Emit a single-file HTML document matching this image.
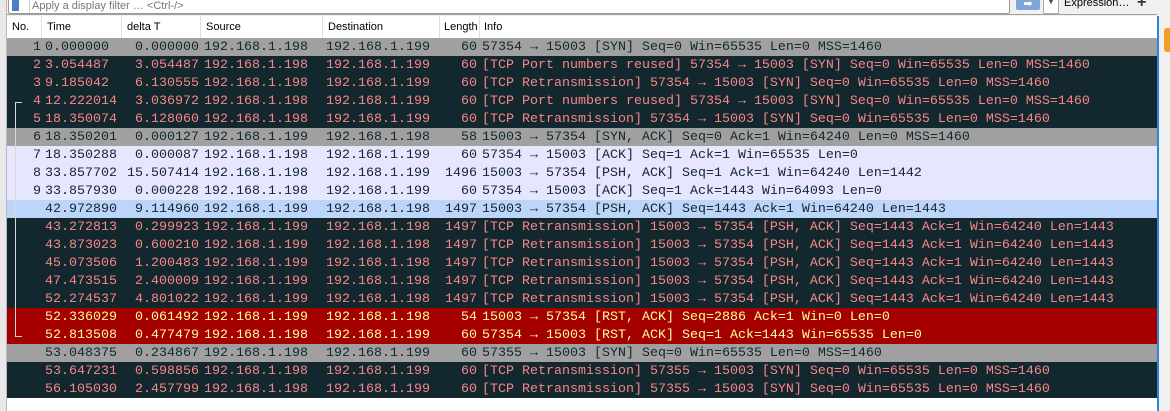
<!DOCTYPE html>
<html><head><meta charset="utf-8"><style>
body{margin:0;width:1170px;height:411px;background:#f0f0f0;position:relative;overflow:hidden;font-family:"Liberation Sans",sans-serif}
.left{position:absolute;left:0;top:0;width:6px;height:411px;background:#e8e8e8;border-right:1px solid #b8b8b8}
.filter{position:absolute;left:8px;top:-2px;width:1000px;height:14px;background:#fff;border:1px solid #9a9a9a;border-radius:2px;font-size:11px;color:#777;line-height:14px}
.filter .bm{position:absolute;left:3px;top:1px;width:7px;height:11px;background:#4a7fc0}
.filter .sep{position:absolute;left:20px;top:0;width:1px;height:14px;background:#ccc}
.filter span{position:absolute;left:23px;top:0}
.arrow{position:absolute;left:1016px;top:-2px;width:24px;height:12px;background:#7fa6d8;border-radius:2px;color:#fff;font-size:11px;text-align:center;line-height:12px}
.dd{position:absolute;left:1043px;top:-2px;width:14px;height:14px;background:#fff;border:1px solid #aaa;font-size:7px;text-align:center;color:#444}
.expr{position:absolute;left:1064px;top:-3px;font-size:11px;color:#000}
.plus{position:absolute;left:1137px;top:-6px;font-size:16px;font-weight:bold;color:#333}
.hline{position:absolute;left:7px;top:14px;width:1150px;height:1px;background:#a0a0a0}
.table{position:absolute;left:7px;top:16px;width:1150px;height:395px;background:#fff;border-right:2px solid #2f86d6}
.hdr{position:absolute;left:0;top:0;width:1150px;height:22px;background:#fff;font-size:11px;color:#000}
.hdr span{position:absolute;top:5px}
.hdr i{position:absolute;top:0;width:1px;height:22px;background:#e0e0e0}
.row{position:absolute;left:0;width:1150px;height:18px;font-family:"Liberation Mono",monospace;font-size:13.33px;line-height:18px;white-space:pre}
.row span{position:absolute;top:1px}
.r{text-align:right}
.g{background:#a0a0a0;color:#12272e}
.d{background:#12272e;color:#f78787}
.l{background:#e7e6ff;color:#12272e}
.s{background:#bed5fa;color:#12272e}
.x{background:#a40000;color:#fffc9c}
.orange{position:absolute;left:1164px;top:28px;width:8px;height:24px;background:#f0a020;border-radius:3px}
.br{position:absolute;left:8px;width:1px;background:#d8d8d8}
</style></head><body>
<div class="left"></div>
<div class="filter"><div class="bm"></div><div class="sep"></div><span>Apply a display filter … &lt;Ctrl-/&gt;</span></div>
<div class="arrow">➡</div><div class="dd">▼</div>
<div class="expr">Expression…</div><div class="plus">+</div>
<div class="hline"></div>
<div class="orange"></div>
<div class="table">
<div class="hdr"><span style="left:5px">No.</span><i style="left:34px"></i><span style="left:40px">Time</span><i style="left:114px"></i><span style="left:120px">delta T</span><i style="left:193px"></i><span style="left:199px">Source</span><i style="left:315px"></i><span style="left:321px">Destination</span><i style="left:432px"></i><span style="left:437px">Length</span><i style="left:472px"></i><span style="left:477px">Info</span></div>
<div id="rows"></div>
</div>
<script>
var R=[
["g","1","0.000000","0.000000","192.168.1.198","192.168.1.199","60","57354 → 15003 [SYN] Seq=0 Win=65535 Len=0 MSS=1460"],
["d","2","3.054487","3.054487","192.168.1.198","192.168.1.199","60","[TCP Port numbers reused] 57354 → 15003 [SYN] Seq=0 Win=65535 Len=0 MSS=1460"],
["d","3","9.185042","6.130555","192.168.1.198","192.168.1.199","60","[TCP Retransmission] 57354 → 15003 [SYN] Seq=0 Win=65535 Len=0 MSS=1460"],
["d","4","12.222014","3.036972","192.168.1.198","192.168.1.199","60","[TCP Port numbers reused] 57354 → 15003 [SYN] Seq=0 Win=65535 Len=0 MSS=1460"],
["d","5","18.350074","6.128060","192.168.1.198","192.168.1.199","60","[TCP Retransmission] 57354 → 15003 [SYN] Seq=0 Win=65535 Len=0 MSS=1460"],
["g","6","18.350201","0.000127","192.168.1.199","192.168.1.198","58","15003 → 57354 [SYN, ACK] Seq=0 Ack=1 Win=64240 Len=0 MSS=1460"],
["l","7","18.350288","0.000087","192.168.1.198","192.168.1.199","60","57354 → 15003 [ACK] Seq=1 Ack=1 Win=65535 Len=0"],
["l","8","33.857702","15.507414","192.168.1.198","192.168.1.199","1496","15003 → 57354 [PSH, ACK] Seq=1 Ack=1 Win=64240 Len=1442"],
["l","9","33.857930","0.000228","192.168.1.198","192.168.1.199","60","57354 → 15003 [ACK] Seq=1 Ack=1443 Win=64093 Len=0"],
["s","","42.972890","9.114960","192.168.1.199","192.168.1.198","1497","15003 → 57354 [PSH, ACK] Seq=1443 Ack=1 Win=64240 Len=1443"],
["d","","43.272813","0.299923","192.168.1.199","192.168.1.198","1497","[TCP Retransmission] 15003 → 57354 [PSH, ACK] Seq=1443 Ack=1 Win=64240 Len=1443"],
["d","","43.873023","0.600210","192.168.1.199","192.168.1.198","1497","[TCP Retransmission] 15003 → 57354 [PSH, ACK] Seq=1443 Ack=1 Win=64240 Len=1443"],
["d","","45.073506","1.200483","192.168.1.199","192.168.1.198","1497","[TCP Retransmission] 15003 → 57354 [PSH, ACK] Seq=1443 Ack=1 Win=64240 Len=1443"],
["d","","47.473515","2.400009","192.168.1.199","192.168.1.198","1497","[TCP Retransmission] 15003 → 57354 [PSH, ACK] Seq=1443 Ack=1 Win=64240 Len=1443"],
["d","","52.274537","4.801022","192.168.1.199","192.168.1.198","1497","[TCP Retransmission] 15003 → 57354 [PSH, ACK] Seq=1443 Ack=1 Win=64240 Len=1443"],
["x","","52.336029","0.061492","192.168.1.199","192.168.1.198","54","15003 → 57354 [RST, ACK] Seq=2886 Ack=1 Win=0 Len=0"],
["x","","52.813508","0.477479","192.168.1.198","192.168.1.199","60","57354 → 15003 [RST, ACK] Seq=1 Ack=1443 Win=65535 Len=0"],
["g","","53.048375","0.234867","192.168.1.198","192.168.1.199","60","57355 → 15003 [SYN] Seq=0 Win=65535 Len=0 MSS=1460"],
["d","","53.647231","0.598856","192.168.1.198","192.168.1.199","60","[TCP Retransmission] 57355 → 15003 [SYN] Seq=0 Win=65535 Len=0 MSS=1460"],
["d","","56.105030","2.457799","192.168.1.198","192.168.1.199","60","[TCP Retransmission] 57355 → 15003 [SYN] Seq=0 Win=65535 Len=0 MSS=1460"]];
var h="";
R.forEach(function(r,i){
h+='<div class="row '+r[0]+'" style="top:'+(22+i*18)+'px">'+
'<span class="r" style="left:0;width:34px">'+r[1]+'</span>'+
'<span style="left:38px">'+r[2]+'</span>'+
'<span class="r" style="left:100px;width:92px">'+r[3]+'</span>'+
'<span style="left:197px">'+r[4]+'</span>'+
'<span style="left:319px">'+r[5]+'</span>'+
'<span class="r" style="left:420px;width:50px">'+r[6]+'</span>'+
'<span style="left:475px">'+r[7]+'</span></div>';
});
h+='<div class="br" style="top:86px;height:234px"></div><div class="br" style="top:86px;height:1px;width:7px"></div><div class="br" style="top:320px;height:1px;width:7px"></div>';
document.getElementById("rows").innerHTML=h;
</script>
</body></html>
